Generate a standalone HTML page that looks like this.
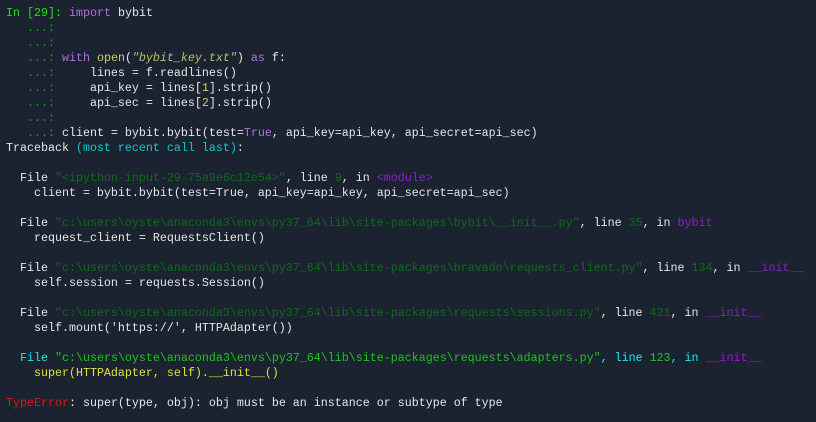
<!DOCTYPE html>
<html><head><meta charset="utf-8"><style>
html,body{margin:0;padding:0;background:#1b2330;width:816px;height:422px;overflow:hidden}
pre{margin:0;padding:6px 0 0 6px;font-family:"Liberation Mono","DejaVu Sans Mono",monospace;font-size:11.67px;line-height:15px;color:#e6e6e6}
.p{color:#13c40f}.pn{color:#26e21a}.d{color:#0fa80f}
.k{color:#b070e0}.s{color:#b8c070;font-style:italic}.n{color:#d0d060}
.c{color:#14c8c8}.g{color:#0f6a1c}.m{color:#8a1fd0}.gb{color:#1ec41e}
.cy{color:#18e8f0}.y{color:#e0e040}.r{color:#e0141e}.mg{color:#a010d0}
</style></head><body><pre><span class="pn">In [</span><span class="pn">29</span><span class="pn">]:</span> <span class="k">import</span> bybit
<span class="d">   ...:</span>
<span class="d">   ...:</span>
<span class="d">   ...:</span> <span class="k">with</span> <span class="n">open</span>(<span class="s">"bybit_key.txt"</span>) <span class="k">as</span> f:
<span class="d">   ...:</span>     lines = f.readlines()
<span class="d">   ...:</span>     api_key = lines[<span class="n">1</span>].strip()
<span class="d">   ...:</span>     api_sec = lines[<span class="n">2</span>].strip()
<span class="d">   ...:</span>
<span class="d">   ...:</span> client = bybit.bybit(test=<span class="k">True</span>, api_key=api_key, api_secret=api_sec)
Traceback <span class="c">(most recent call last)</span>:

  File <span class="g">"&lt;ipython-input-29-75a9e6c12e54&gt;"</span>, line <span class="g">9</span>, in <span class="m">&lt;module&gt;</span>
    client = bybit.bybit(test=True, api_key=api_key, api_secret=api_sec)

  File <span class="g">"c:\users\oyste\anaconda3\envs\py37_64\lib\site-packages\bybit\__init__.py"</span>, line <span class="g">35</span>, in <span class="m">bybit</span>
    request_client = RequestsClient()

  File <span class="g">"c:\users\oyste\anaconda3\envs\py37_64\lib\site-packages\bravado\requests_client.py"</span>, line <span class="g">134</span>, in <span class="m">__init__</span>
    self.session = requests.Session()

  File <span class="g">"c:\users\oyste\anaconda3\envs\py37_64\lib\site-packages\requests\sessions.py"</span>, line <span class="g">421</span>, in <span class="m">__init__</span>
    self.mount('https://', HTTPAdapter())

  <span class="cy">File</span> <span class="gb">"c:\users\oyste\anaconda3\envs\py37_64\lib\site-packages\requests\adapters.py"</span><span class="cy">, line </span><span class="gb">123</span><span class="cy">, in </span><span class="mg">__init__</span>
    <span class="y">super(HTTPAdapter, self).__init__()</span>

<span class="r">TypeError</span>: super(type, obj): obj must be an instance or subtype of type
</pre></body></html>
